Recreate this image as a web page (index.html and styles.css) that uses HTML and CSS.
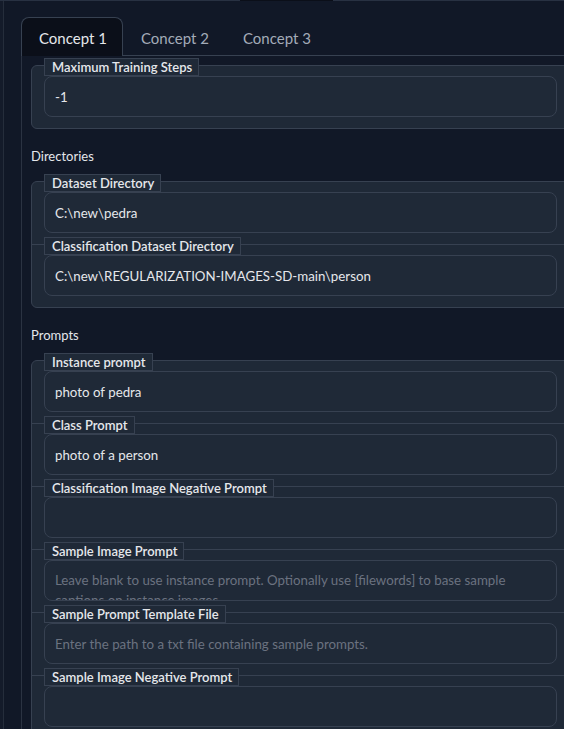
FILE: index.html
```html
<!DOCTYPE html>
<html lang="en">
<head>
<meta charset="utf-8">
<title>Concepts</title>
<link rel="stylesheet" href="styles.css">
</head>
<body>
<div class="app">
  <div class="outer-nav"><span class="seg seg-a"></span><span class="seg seg-sel"></span><span class="seg seg-b"></span></div>
  <div class="outer-panel">
    <div class="tabs">
      <div class="tab-nav">
        <button class="tab selected">Concept 1</button>
        <button class="tab">Concept 2</button>
        <button class="tab">Concept 3</button>
      </div>
      <div class="tab-panel">
        <div class="form">
          <div class="field"><span class="label">Maximum Training Steps</span><input class="textbox" value="-1"></div>
        </div>
        <div class="heading">Directories</div>
        <div class="form">
          <div class="field"><span class="label">Dataset Directory</span><input class="textbox" value="C:\new\pedra"></div>
          <div class="field"><span class="label">Classification Dataset Directory</span><input class="textbox" value="C:\new\REGULARIZATION-IMAGES-SD-main\person"></div>
        </div>
        <div class="heading">Prompts</div>
        <div class="form">
          <div class="field"><span class="label">Instance prompt</span><input class="textbox" value="photo of pedra"></div>
          <div class="field"><span class="label">Class Prompt</span><input class="textbox" value="photo of a person"></div>
          <div class="field"><span class="label">Classification Image Negative Prompt</span><input class="textbox" value=""></div>
          <div class="field"><span class="label">Sample Image Prompt</span><textarea class="textbox area" placeholder="Leave blank to use instance prompt. Optionally use [filewords] to base sample captions on instance images."></textarea></div>
          <div class="field"><span class="label">Sample Prompt Template File</span><input class="textbox" value="" placeholder="Enter the path to a txt file containing sample prompts."></div>
          <div class="field"><span class="label">Sample Image Negative Prompt</span><input class="textbox" value=""></div>
        </div>
      </div>
    </div>
  </div>
</div>
</body>
</html>
```
FILE: styles.css
```css
* { box-sizing: border-box; }
html, body { margin: 0; height: 100%; overflow: hidden; }
body { background: #141b2a; font-family: Lato, "Noto Sans", sans-serif; }
.app { width: 620px; }
.outer-nav { display: flex; height: 1px; }
.seg { display: block; height: 1px; }
.seg-a { width: 240px; background: #283142; }
.seg-sel { width: 93px; background: #0b0f19; }
.seg-b { flex: 1; background: #283142; }
.outer-panel { margin-left: 3px; border-left: 1px solid #252d3b; background: #111827; padding: 16px 0 0 17px; min-height: 740px; }
.tab-nav { display: flex; border-bottom: 1px solid #374151; }
.tab {
  width: 102px; height: 39px; margin-bottom: -1px;
  padding: 10px 0 8px 17px; text-align: left;
  font: 400 15px/20px Lato, "Noto Sans", sans-serif;
  color: #a3abb8; background: none;
  border: 1px solid transparent; border-bottom: 0; border-radius: 8px 8px 0 0;
}
.tab.selected { background: #0b0f19; border-color: #374151; color: #e5e7eb; }
.tab-panel { border-left: 1px solid #2b3342; padding: 9px 0 0 9px; min-height: 700px; }
.form { width: 539px; background: #1f2937; border: 1px solid #374151; border-radius: 6px; }
.field { position: relative; padding: 10px 12px 11px; }
.field + .field { border-top: 1px solid #374151; }
.label {
  position: absolute; top: -8px; left: 12px; height: 18px;
  padding: 0 6px 0 7px; border: 1px solid #374151; background: #1f2937;
  font: 600 13px/16px Lato, "Noto Sans", sans-serif; color: #e5e7eb; white-space: nowrap;
}
.textbox {
  display: block; width: 100%; height: 41px; margin: 0;
  padding: 0 10px; background: #1f2937;
  border: 1px solid #374151; border-radius: 8px; outline: none;
  font: 400 13.3px Lato, "Noto Sans", sans-serif; color: #e5e7eb;
}
.textbox::placeholder { color: #6b7280; opacity: 1; }
.area { padding: 9px 10px; line-height: 20px; resize: none; overflow: hidden; }
.heading { margin: 17px 0 15px; font: 400 13px/20px Lato, "Noto Sans", sans-serif; color: #e5e7eb; }
```
